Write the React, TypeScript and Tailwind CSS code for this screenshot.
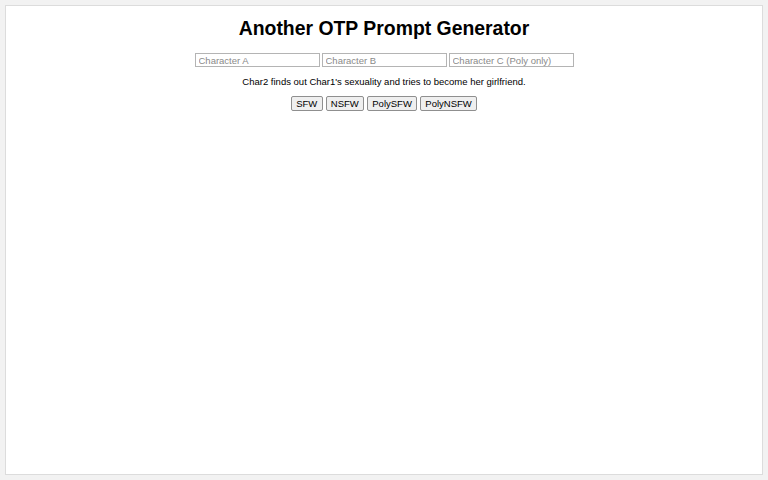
import { useState } from 'react'

const prompts = [
  "Char2 finds out Char1's sexuality and tries to become her girlfriend.",
]

export default function App() {
  const [a, setA] = useState('')
  const [b, setB] = useState('')
  const [c, setC] = useState('')
  const [prompt, setPrompt] = useState(prompts[0])

  const field =
    'h-[14px] w-[125px] border border-[#b4b4b4] bg-white px-[3px] text-[9.5px] leading-none text-black outline-none placeholder:text-[#8a8a8a]'
  const btn =
    'h-[15px] rounded-[2px] border border-[#8f8f8f] bg-[#efefef] px-[4.25px] text-[9.5px] leading-none text-black'

  return (
    <div className="min-h-[480px] bg-[#f2f2f2] p-[5px] font-['Liberation_Sans',Arial,sans-serif]">
      <div className="flex h-[470px] flex-col items-center border border-[#dcdcdc] bg-white">
        <h1 className="mt-[10px] text-[19.4px] font-bold leading-[24px] text-black">Another OTP Prompt Generator</h1>
        <div className="mt-[13px] flex gap-[2px]">
          <input className={field} placeholder="Character A" value={a} onChange={(e) => setA(e.target.value)} />
          <input className={field} placeholder="Character B" value={b} onChange={(e) => setB(e.target.value)} />
          <input className={field} placeholder="Character C (Poly only)" value={c} onChange={(e) => setC(e.target.value)} />
        </div>
        <p className="mt-[9px] text-[9.5px] leading-[12px] text-black">{prompt}</p>
        <div className="mt-[8px] flex gap-[3px]">
          {['SFW', 'NSFW', 'PolySFW', 'PolyNSFW'].map((k) => (
            <button key={k} className={btn} onClick={() => setPrompt(prompts[0])}>
              {k}
            </button>
          ))}
        </div>
      </div>
    </div>
  )
}
